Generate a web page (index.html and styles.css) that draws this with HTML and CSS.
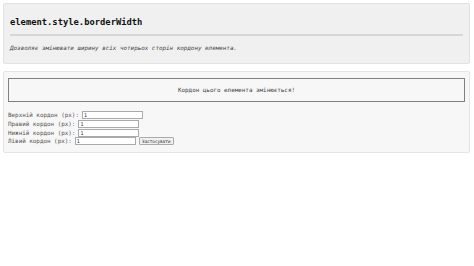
FILE: index.html
```html
<!DOCTYPE html>
<html lang="uk">
<head>
    <meta charset="UTF-8">
    <meta name="viewport" content="width=device-width, initial-scale=1.0">
    <title>element.style.borderWidth</title>
    <link rel="stylesheet" href="styles.css">
</head>
<body>
    <div class="header-box">
        <h1>element.style.borderWidth</h1>
        <hr>
        <p class="desc">Дозволяє змінювати ширину всіх чотирьох сторін кордону елемента.</p>
    </div>
    <div class="demo-box">
        <div id="target" class="target">Кордон цього елемента змінюється!</div>
        <div class="form">
            <div class="row"><label for="top">Верхній кордон (px):</label> <input id="top" type="text" value="1"></div>
            <div class="row"><label for="right">Правий кордон (px):</label> <input id="right" type="text" value="1"></div>
            <div class="row"><label for="bottom">Нижній кордон (px):</label> <input id="bottom" type="text" value="1"></div>
            <div class="row"><label for="left">Лівий кордон (px):</label> <input id="left" type="text" value="1"> <button id="apply">Застосувати</button></div>
        </div>
    </div>
</body>
</html>
```
FILE: styles.css
```css
html, body {
    margin: 0;
    padding: 0;
    background: #fff;
}
body {
    padding: 3px 4px 3px 3px;
    font-family: 'DejaVu Sans Mono', monospace;
    color: #222;
}
.header-box {
    background: #f0f0f0;
    border: 1px solid #e2e2e2;
    border-radius: 2px;
    padding: 12px 6px 10px 6px;
    height: 37px;
}
h1 {
    margin: 0;
    font-size: 8.8px;
    font-weight: bold;
    line-height: 12px;
    color: #111;
}
hr {
    margin: 6px 0 0 0;
    border: none;
    border-top: 2px solid #d6d6d6;
    height: 0;
}
.desc {
    margin: 8px 0 0 0;
    font-size: 5.9px;
    font-style: italic;
    line-height: 8px;
    color: #444;
}
.demo-box {
    margin-top: 7px;
    background: #f7f7f7;
    border: 1px solid #e4e4e4;
    border-radius: 2px;
    padding: 6px 4px 6px 4px;
}
.target {
    border: 1px solid #808080;
    height: 22px;
    line-height: 22px;
    text-align: center;
    font-size: 5.9px;
    color: #444;
}
.form {
    margin-top: 9px;
}
.row {
    height: 8.7px;
    display: flex;
    align-items: center;
    font-size: 5.9px;
    color: #555;
}
.row label {
    white-space: pre;
    margin-right: 3px;
}
input {
    width: 57px;
    height: 6px;
    padding: 0 1px;
    border: 1px solid #aaa;
    font-size: 5px;
    font-family: 'DejaVu Sans', sans-serif;
    background: #fff;
    color: #333;
}
button {
    margin-left: 3px;
    height: 8px;
    padding: 0 2px;
    font-size: 4.4px;
    font-family: 'DejaVu Sans', sans-serif;
    border: 1px solid #aaa;
    border-radius: 1px;
    background: #f0f0f0;
    color: #333;
}
```
